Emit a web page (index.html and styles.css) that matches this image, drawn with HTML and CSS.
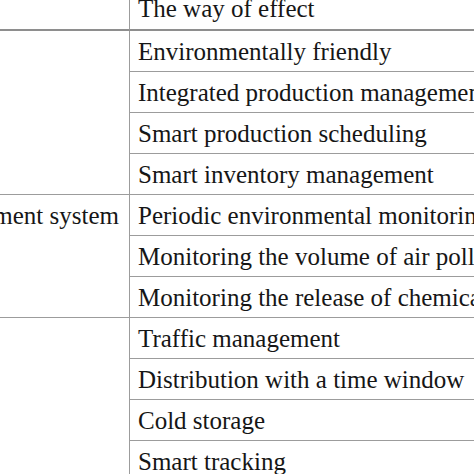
FILE: index.html
```html
<!DOCTYPE html>
<html lang="en">
<head>
<meta charset="utf-8">
<title>The way of effect</title>
<link rel="stylesheet" href="styles.css">
</head>
<body>
<table class="effects">
  <colgroup>
    <col class="col-system">
    <col class="col-effect">
  </colgroup>
  <thead>
    <tr>
      <th class="system"></th>
      <th class="effect">The way of effect</th>
    </tr>
  </thead>
  <tbody>
    <tr>
      <td class="system" rowspan="4"></td>
      <td class="effect">Environmentally friendly</td>
    </tr>
    <tr><td class="effect">Integrated production management</td></tr>
    <tr><td class="effect">Smart production scheduling</td></tr>
    <tr><td class="effect">Smart inventory management</td></tr>
    <tr>
      <td class="system" rowspan="3"><div class="system-label"><span>Environmental management system</span></div></td>
      <td class="effect">Periodic environmental monitoring</td>
    </tr>
    <tr><td class="effect">Monitoring the volume of air pollution</td></tr>
    <tr><td class="effect">Monitoring the release of chemicals</td></tr>
    <tr>
      <td class="system" rowspan="5"></td>
      <td class="effect">Traffic management</td>
    </tr>
    <tr><td class="effect">Distribution with a time window</td></tr>
    <tr><td class="effect">Cold storage</td></tr>
    <tr><td class="effect">Smart tracking</td></tr>
    <tr><td class="effect">Smart packaging</td></tr>
  </tbody>
</table>
</body>
</html>
```
FILE: styles.css
```css
html, body {
  margin: 0;
  padding: 0;
  overflow: hidden;
  background: #ffffff;
}

body {
  width: 474px;
  height: 474px;
}

.effects {
  table-layout: fixed;
  width: 1000px;
  border-collapse: separate;
  border-spacing: 0;
  margin-top: -12px;
  font-family: "Liberation Serif", "Times New Roman", serif;
  font-size: 25px;
  line-height: 28px;
  color: #161616;
}

.col-system {
  width: 130px;
}

.col-effect {
  width: 870px;
}

.effects th,
.effects td {
  padding: 7px 0 5px 0;
  border-bottom: 1px solid #9c9c9c;
  font-weight: normal;
  text-align: left;
  vertical-align: top;
  white-space: nowrap;
}

.effects th {
  padding-bottom: 6px;
  border-bottom: 2px solid #8e8e8e;
}

.effects .system {
  border-right: 1px solid #9c9c9c;
  padding-right: 10px;
}

.effects .effect {
  padding-left: 8px;
  overflow: hidden;
}

.system-label {
  display: flex;
  justify-content: flex-end;
}

.system-label span {
  flex: none;
}
```
